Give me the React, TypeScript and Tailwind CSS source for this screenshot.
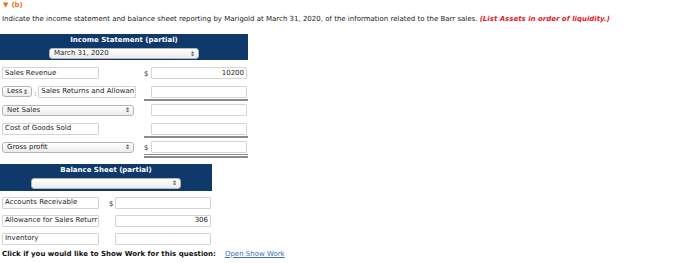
import React from "react";

const font = { fontFamily: '"DejaVu Sans", Verdana, sans-serif' };

function Box({ text, w, right }: { text?: string; w: string; right?: boolean }) {
  return (
    <div
      className={`${w} h-[12px] shrink-0 overflow-hidden whitespace-nowrap border border-[#d4d4d4] rounded-[1px] bg-white flex items-center px-[2px] text-[7px] leading-none text-[#222] ${
        right ? "justify-end" : ""
      }`}
    >
      {text}
    </div>
  );
}

function Select({ text, w }: { text?: string; w: string }) {
  return (
    <div
      className={`${w} h-[11px] shrink-0 whitespace-nowrap border border-[#b5b5b5] rounded-[3px] bg-gradient-to-b from-white to-[#ececec] flex items-center justify-between pl-[4px] pr-[3px] text-[7px] leading-none text-[#222]`}
    >
      <span>{text}</span>
      <span className="text-[6px] leading-none">⇕</span>
    </div>
  );
}

function Dollar() {
  return <span className="text-[7px] leading-none text-[#333]">$</span>;
}

function IncomeRow({
  left,
  dollar,
  value,
  line,
}: {
  left: React.ReactNode;
  dollar?: boolean;
  value?: string;
  line?: "single" | "double";
}) {
  return (
    <div className="flex items-start h-[18.5px]">
      <div className="w-[144px] pl-[2px] flex items-center h-[12px]">{left}</div>
      <div className="flex flex-col w-[104px]">
        <div className="flex items-end">
          <div className="w-[7px] flex items-end pb-[1px]">{dollar ? <Dollar /> : null}</div>
          <Box w="w-[96px]" text={value} right />
        </div>
        {line === "single" ? <div className="mt-[1px] h-[2px] bg-[#8a8a8a]" /> : null}
        {line === "double" ? (
          <div className="mt-[1px] flex flex-col gap-[1px]">
            <div className="h-[1px] bg-[#8a8a8a]" />
            <div className="h-[2px] bg-[#8a8a8a]" />
          </div>
        ) : null}
      </div>
    </div>
  );
}

function BalanceRow({ left, dollar, value }: { left: string; dollar?: boolean; value?: string }) {
  return (
    <div className="flex items-end h-[18px]">
      <div className="w-[109px] pl-[2px]">
        <Box w="w-[97px]" text={left} />
      </div>
      <div className="w-[6px] flex items-end pb-[1px]">{dollar ? <Dollar /> : null}</div>
      <Box w="w-[96px]" text={value} right />
    </div>
  );
}

export default function App() {
  return (
    <div className="w-[700px] h-[263px] bg-white overflow-hidden" style={font}>
      <div className="pt-[2px] pl-[3px] flex items-center gap-[3px] text-[#e3761d] text-[7px] font-bold leading-none h-[9px]">
        <span className="text-[7px]">▼</span>
        <span>(b)</span>
      </div>
      <div className="mt-[7px] pl-[2px] text-[7px] leading-none text-[#222] whitespace-nowrap">
        Indicate the income statement and balance sheet reporting by Marigold at March 31, 2020, of the information related to
        the Barr sales.{" "}
        <span className="text-[#e3232c] font-bold italic">(List Assets in order of liquidity.)</span>
      </div>

      <div className="mt-[11px] w-[248px] h-[26px] bg-[#0f386b] flex flex-col items-center pt-[3px]">
        <div className="text-white font-bold text-[7px] leading-none">Income Statement (partial)</div>
        <div className="mt-[4px]">
          <Select w="w-[150px]" text="March 31, 2020" />
        </div>
      </div>

      <div className="mt-[7px] flex flex-col">
        <IncomeRow left={<Box w="w-[97px]" text="Sales Revenue" />} dollar value="10200" />
        <IncomeRow
          left={
            <>
              <Select w="w-[30px]" text="Less" />
              <span className="text-[7px] leading-none mx-[2px] text-[#333] self-end">:</span>
              <Box w="w-[98px]" text="Sales Returns and Allowan" />
            </>
          }
          line="single"
        />
        <IncomeRow left={<Select w="w-[132px]" text="Net Sales" />} />
        <IncomeRow left={<Box w="w-[97px]" text="Cost of Goods Sold" />} line="single" />
        <IncomeRow left={<Select w="w-[132px]" text="Gross profit" />} dollar line="double" />
      </div>

      <div className="mt-[4px] w-[212px] h-[27px] bg-[#0f386b] flex flex-col items-center pt-[3px]">
        <div className="text-white font-bold text-[7px] leading-none">Balance Sheet (partial)</div>
        <div className="mt-[4px]">
          <Select w="w-[150px]" />
        </div>
      </div>

      <div className="mt-[0px] flex flex-col">
        <BalanceRow left="Accounts Receivable" dollar />
        <BalanceRow left="Allowance for Sales Returr" value="306" />
        <BalanceRow left="Inventory" />
      </div>

      <div className="mt-[6px] pl-[2px] flex items-center text-[7px] leading-none whitespace-nowrap">
        <span className="font-bold text-[#111]">Click if you would like to Show Work for this question:</span>
        <span className="ml-[9px] text-[#3a6fb5] underline">Open Show Work</span>
      </div>
    </div>
  );
}
